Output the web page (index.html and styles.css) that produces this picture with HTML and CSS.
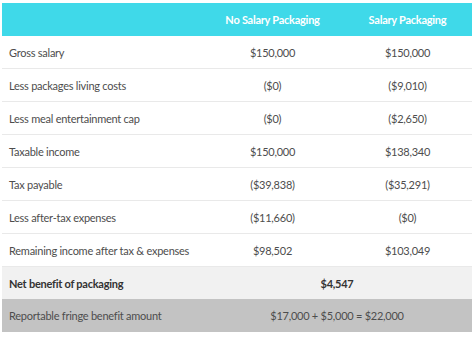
FILE: index.html
```html
<!DOCTYPE html>
<html>
<head>
<meta charset="utf-8">
<link rel="stylesheet" href="styles.css">
</head>
<body>
<table class="pkg">
  <colgroup>
    <col class="c-label">
    <col class="c-no">
    <col class="c-yes">
  </colgroup>
  <thead>
    <tr class="head">
      <th></th>
      <th>No Salary Packaging</th>
      <th>Salary Packaging</th>
    </tr>
  </thead>
  <tbody>
    <tr><td>Gross salary</td><td>$150,000</td><td>$150,000</td></tr>
    <tr><td>Less packages living costs</td><td>($0)</td><td>($9,010)</td></tr>
    <tr><td>Less meal entertainment cap</td><td>($0)</td><td>($2,650)</td></tr>
    <tr><td>Taxable income</td><td>$150,000</td><td>$138,340</td></tr>
    <tr><td>Tax payable</td><td>($39,838)</td><td>($35,291)</td></tr>
    <tr><td>Less after-tax expenses</td><td>($11,660)</td><td>($0)</td></tr>
    <tr><td>Remaining income after tax &amp; expenses</td><td>$98,502</td><td>$103,049</td></tr>
    <tr class="net"><td>Net benefit of packaging</td><td colspan="2">$4,547</td></tr>
    <tr class="fringe"><td>Reportable fringe benefit amount</td><td colspan="2">$17,000 + $5,000 = $22,000</td></tr>
  </tbody>
</table>
</body>
</html>
```
FILE: styles.css
```css
html, body {
  margin: 0;
  padding: 0;
  background: #ffffff;
}
body {
  padding: 3px 2px 0 2px;
  font-family: Lato, "Open Sans", sans-serif;
  font-size: 11px;
  letter-spacing: -0.25px;
  color: #4d4d4d;
}
.pkg {
  width: 470px;
  border-collapse: collapse;
  table-layout: fixed;
}
.c-label { width: 200px; }
.c-no { width: 141px; }
.c-yes { width: 129px; }
.pkg th,
.pkg td {
  height: 32px;
  padding: 0;
  vertical-align: middle;
  text-align: center;
}
.pkg td {
  border-bottom: 1px solid #e9e9e9;
}
.pkg td:first-child {
  text-align: left;
  padding-left: 7px;
}
.head th {
  height: 33px;
  background: #3fd9e9;
  color: #ffffff;
  font-weight: 700;
}
.net td {
  background: #f1f1f1;
  font-weight: 700;
  color: #333333;
  border-bottom: none;
}
.fringe td {
  background: #c3c3c3;
  color: #4d4d4d;
  border-bottom: none;
  height: 33px;
}
```
